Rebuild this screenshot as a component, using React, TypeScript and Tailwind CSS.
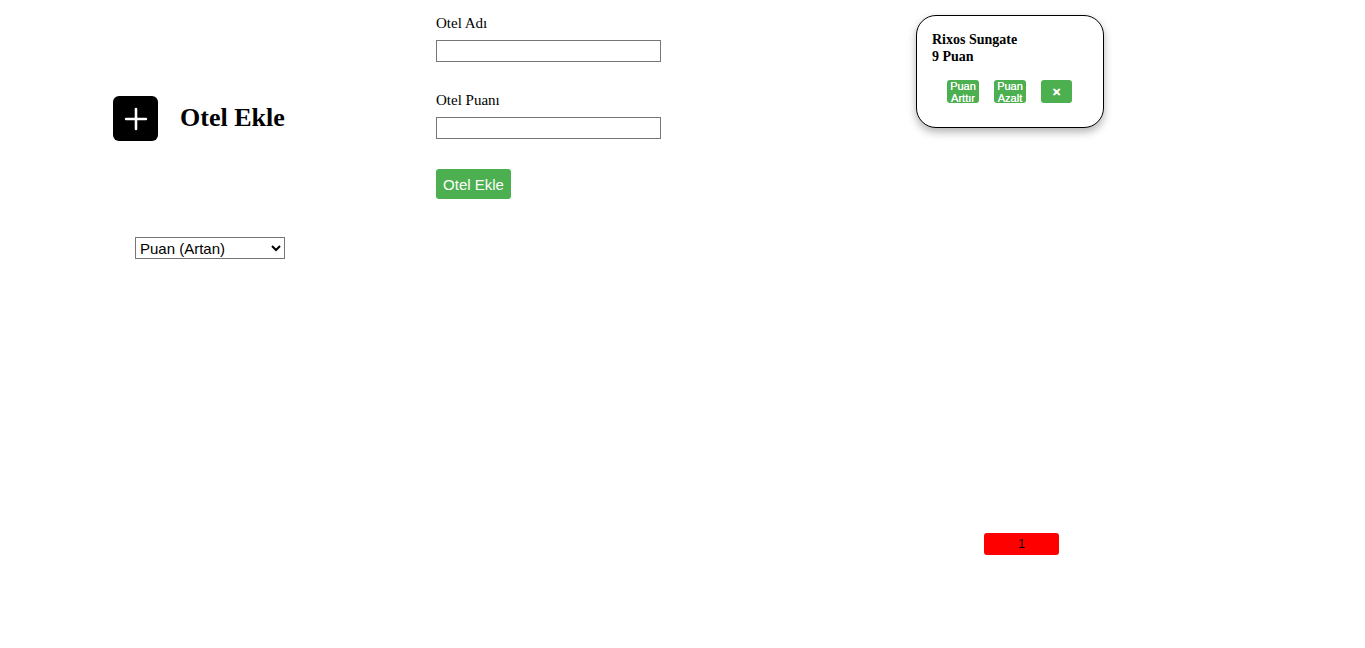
import { Plus } from "lucide-react";

const serif = "font-['Liberation_Serif',serif]";
const sans = "font-['Liberation_Sans',sans-serif]";

function HotelCard() {
  const smallBtn = `h-[23px] bg-[#4CAF50] text-white rounded-[3px] text-[11px] leading-[12px] [text-shadow:0_0_0.4px_white] ${sans}`;
  return (
    <div className="w-[188px] h-[113px] border border-black rounded-[20px] bg-white shadow-[0_4px_8px_rgba(0,0,0,0.3)] pt-[15px] pl-[15px]">
      <div className={`${serif} font-bold text-[14px] leading-[17px] text-black`}>
        <div>Rixos Sungate</div>
        <div>9 Puan</div>
      </div>
      <div className="flex gap-[15px] ml-[15px] mt-[15px]">
        <button className={`${smallBtn} w-8`}>Puan Arttır</button>
        <button className={`${smallBtn} w-8`}>Puan Azalt</button>
        <button className={`${smallBtn} w-[31px] font-bold`}>✕</button>
      </div>
    </div>
  );
}

export default function App() {
  return (
    <div className={`flex h-[648px] bg-white text-black ${serif}`}>
      <div className="w-[323px] ml-[113px] pt-[96px]">
        <div className="flex items-start gap-[22px]">
          <div className="w-[45px] h-[45px] rounded-[6px] bg-black flex items-center justify-center">
            <Plus size={34} color="white" strokeWidth={1.8} />
          </div>
          <h1 className="h-[45px] text-[26px] font-bold leading-[43px]">Otel Ekle</h1>
        </div>
        <select className={`block mt-[96px] ml-[22px] w-[150px] h-[22px] border border-[#767676] bg-white text-[15px] ${sans}`}>
          <option>Puan (Artan)</option>
          <option>Puan (Azalan)</option>
        </select>
      </div>

      <div className="w-[480px] pt-[15px]">
        <label className="block text-[15px] leading-[16px]">Otel Adı</label>
        <input type="text" className="block mt-[9px] w-[225px] h-[22px] border border-[#767676]" />
        <label className="block mt-[30px] text-[15px] leading-[16px]">Otel Puanı</label>
        <input type="text" className="block mt-[9px] w-[225px] h-[22px] border border-[#767676]" />
        <button className={`block mt-[30px] w-[75px] h-[30px] pt-[2px] bg-[#4CAF50] text-white text-[15px] rounded-[3px] ${sans}`}>
          Otel Ekle
        </button>
      </div>

      <div className="pt-[15px]">
        <HotelCard />
        <button className={`block mt-[405px] ml-[68px] w-[75px] h-[22px] bg-[#FF0000] rounded-[3px] text-[12px] text-black ${sans}`}>
          1
        </button>
      </div>
    </div>
  );
}
